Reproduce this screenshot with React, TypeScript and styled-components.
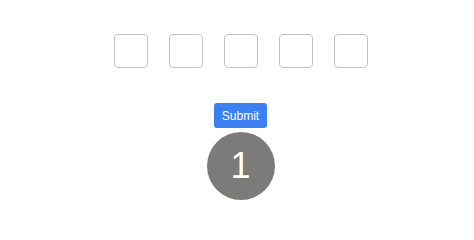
import React from "react";
import styled, { createGlobalStyle } from "styled-components";

const Global = createGlobalStyle`
  html, body { margin: 0; padding: 0; background: #ffffff; }
  body { font-family: "Liberation Sans", Arial, sans-serif; }
`;

const Page = styled.div`
  display: flex;
  flex-direction: column;
  align-items: center;
  padding: 34px 0 0 7px;
`;

const CodeRow = styled.div`
  display: flex;
  gap: 21px;
  margin-bottom: 35px;
`;

const CodeBox = styled.input`
  box-sizing: border-box;
  width: 34px;
  height: 34px;
  border: 1px solid #c4c4c4;
  border-radius: 4px;
  background: #fff;
  padding: 0;
  text-align: center;
  font-size: 16px;
  outline: none;
`;

const SubmitButton = styled.button`
  box-sizing: border-box;
  width: 53px;
  height: 25px;
  border: none;
  border-radius: 3px;
  background: #3b7ff2;
  color: #ffffff;
  font-family: "Liberation Sans", Arial, sans-serif;
  font-size: 12px;
  padding: 0;
  margin-bottom: 4px;
`;

const Counter = styled.div`
  width: 68px;
  height: 68px;
  border-radius: 50%;
  background: #7b7b79;
  color: #ffffff;
  display: flex;
  align-items: center;
  justify-content: center;
  font-family: "Liberation Sans", Arial, sans-serif;
  font-size: 36px;
`;

export default function App() {
  return (
    <>
      <Global />
      <Page>
        <CodeRow>
          {[0, 1, 2, 3, 4].map((i) => (
            <CodeBox key={i} type="text" maxLength={1} />
          ))}
        </CodeRow>
        <SubmitButton>Submit</SubmitButton>
        <Counter>1</Counter>
      </Page>
    </>
  );
}
